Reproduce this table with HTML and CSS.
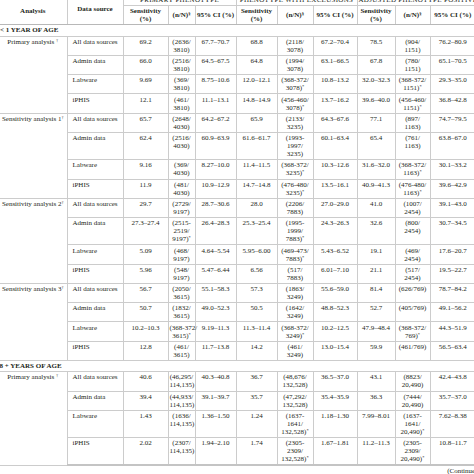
FILE: index.html
```html
<!DOCTYPE html>
<html>
<head>
<meta charset="utf-8">
<link rel="stylesheet" href="styles.css">
</head>
<body>
<div class="page">
<table class="data">
<colgroup>
<col class="w-an"><col class="w-ds">
<col class="w-s1"><col class="w-n1"><col class="w-c1">
<col class="w-s2"><col class="w-n2"><col class="w-c2">
<col class="w-s3"><col class="w-n3"><col class="w-c3">
</colgroup>
<thead>
<tr class="grp">
<th class="an" rowspan="2">Analysis</th>
<th class="ds-h" rowspan="2">Data source</th>
<th class="g" colspan="3">Primary phenotype</th>
<th class="g" colspan="3">Phenotype with exclusions</th>
<th class="g last" colspan="3">Adjusted phenotype positive</th>
</tr>
<tr class="sub">
<th>Sensitivity<br>(%)</th><th>(n/N)<span class="sup">§</span></th><th>95% CI (%)</th>
<th>Sensitivity<br>(%)</th><th>(n/N)<span class="sup">§</span></th><th>95% CI (%)</th>
<th>Sensitivity<br>(%)</th><th>(n/N)<span class="sup">§</span></th><th class="last">95% CI (%)</th>
</tr>
</thead>
<tbody>
<tr class="sec"><td colspan="11">&lt; 1 YEAR OF AGE</td></tr>

<tr><td class="an" rowspan="4">Primary analysis <span class="sup">†</span></td><td class="ds">All data sources</td><td>69.2</td><td>(2636/<br>3810)</td><td>67.7–70.7</td><td>68.8</td><td>(2118/<br>3078)</td><td>67.2–70.4</td><td>78.5</td><td>(904/<br>1151)</td><td class="last">76.2–80.9</td></tr>
<tr><td class="ds">Admin data</td><td>66.0</td><td>(2516/<br>3810)</td><td>64.5–67.5</td><td>64.8</td><td>(1994/<br>3078)</td><td>63.1–66.5</td><td>67.8</td><td>(780/<br>1151)</td><td class="last">65.1–70.5</td></tr>
<tr><td class="ds">Labware</td><td>9.69</td><td>(369/<br>3810)</td><td>8.75–10.6</td><td>12.0–12.1</td><td>(368-372/<br>3078)<span class="sup">*</span></td><td>10.8–13.2</td><td>32.0–32.3</td><td>(368-372/<br>1151)<span class="sup">*</span></td><td class="last">29.3–35.0</td></tr>
<tr><td class="ds">iPHIS</td><td>12.1</td><td>(461/<br>3810)</td><td>11.1–13.1</td><td>14.8–14.9</td><td>(456-460/<br>3078)<span class="sup">*</span></td><td>13.7–16.2</td><td>39.6–40.0</td><td>(456-460/<br>1151)<span class="sup">*</span></td><td class="last">36.8–42.8</td></tr>

<tr><td class="an" rowspan="4">Sensitivity analysis 1<span class="sup">†</span></td><td class="ds">All data sources</td><td>65.7</td><td>(2648/<br>4030)</td><td>64.2–67.2</td><td>65.9</td><td>(2133/<br>3235)</td><td>64.3–67.6</td><td>77.1</td><td>(897/<br>1163)</td><td class="last">74.7–79.5</td></tr>
<tr><td class="ds">Admin data</td><td>62.4</td><td>(2516/<br>4030)</td><td>60.9–63.9</td><td>61.6–61.7</td><td>(1993-<br>1997/<br>3235)</td><td>60.1–63.4</td><td>65.4</td><td>(761/<br>1163)</td><td class="last">63.8–67.0</td></tr>
<tr><td class="ds">Labware</td><td>9.16</td><td>(369/<br>4030)</td><td>8.27–10.0</td><td>11.4–11.5</td><td>(368-372/<br>3235)<span class="sup">*</span></td><td>10.3–12.6</td><td>31.6–32.0</td><td>(368-372/<br>1163)<span class="sup">*</span></td><td class="last">30.1–33.2</td></tr>
<tr><td class="ds">iPHIS</td><td>11.9</td><td>(481/<br>4030)</td><td>10.9–12.9</td><td>14.7–14.8</td><td>(476-480/<br>3235)<span class="sup">*</span></td><td>13.5–16.1</td><td>40.9–41.3</td><td>(476-480/<br>1163)<span class="sup">*</span></td><td class="last">39.6–42.9</td></tr>

<tr><td class="an" rowspan="4">Sensitivity analysis 2<span class="sup">†</span></td><td class="ds">All data sources</td><td>29.7</td><td>(2729/<br>9197)</td><td>28.7–30.6</td><td>28.0</td><td>(2206/<br>7883)</td><td>27.0–29.0</td><td>41.0</td><td>(1007/<br>2454)</td><td class="last">39.1–43.0</td></tr>
<tr><td class="ds">Admin data</td><td>27.3–27.4</td><td>(2515-<br>2519/<br>9197)<span class="sup">*</span></td><td>26.4–28.3</td><td>25.3–25.4</td><td>(1995-<br>1999/<br>7883)<span class="sup">*</span></td><td>24.3–26.3</td><td>32.6</td><td>(800/<br>2454)</td><td class="last">30.7–34.5</td></tr>
<tr><td class="ds">Labware</td><td>5.09</td><td>(468/<br>9197)</td><td>4.64–5.54</td><td>5.95–6.00</td><td>(469-473/<br>7883)<span class="sup">*</span></td><td>5.43–6.52</td><td>19.1</td><td>(469/<br>2454)</td><td class="last">17.6–20.7</td></tr>
<tr><td class="ds">iPHIS</td><td>5.96</td><td>(548/<br>9197)</td><td>5.47–6.44</td><td>6.56</td><td>(517/<br>7883)</td><td>6.01–7.10</td><td>21.1</td><td>(517/<br>2454)</td><td class="last">19.5–22.7</td></tr>

<tr><td class="an" rowspan="4">Sensitivity analysis 3<span class="sup">†</span></td><td class="ds">All data sources</td><td>56.7</td><td>(2050/<br>3615)</td><td>55.1–58.3</td><td>57.3</td><td>(1863/<br>3249)</td><td>55.6–59.0</td><td>81.4</td><td>(626/769)</td><td class="last">78.7–84.2</td></tr>
<tr><td class="ds">Admin data</td><td>50.7</td><td>(1832/<br>3615)</td><td>49.0–52.3</td><td>50.5</td><td>(1642/<br>3249)</td><td>48.8–52.3</td><td>52.7</td><td>(405/769)</td><td class="last">49.1–56.2</td></tr>
<tr><td class="ds">Labware</td><td>10.2–10.3</td><td>(368-372/<br>3615)<span class="sup">*</span></td><td>9.19–11.3</td><td>11.3–11.4</td><td>(368-372/<br>3249)<span class="sup">*</span></td><td>10.2–12.5</td><td>47.9–48.4</td><td>(368-372/<br>769)<span class="sup">*</span></td><td class="last">44.3–51.9</td></tr>
<tr><td class="ds">iPHIS</td><td>12.8</td><td>(461/<br>3615)</td><td>11.7–13.8</td><td>14.2</td><td>(461/<br>3249)</td><td>13.0–15.4</td><td>59.9</td><td>(461/769)</td><td class="last">56.5–63.4</td></tr>

<tr class="sec"><td colspan="11"><span class="clip">18 + YEARS OF AGE</span></td></tr>

<tr><td class="an" rowspan="4">Primary analysis <span class="sup">†</span></td><td class="ds">All data sources</td><td>40.6</td><td>(46,295/<br>114,135)</td><td>40.3–40.8</td><td>36.7</td><td>(48,676/<br>132,528)</td><td>36.5–37.0</td><td>43.1</td><td>(8823/<br>20,490)</td><td class="last">42.4–43.8</td></tr>
<tr><td class="ds">Admin data</td><td>39.4</td><td>(44,933/<br>114,135)</td><td>39.1–39.7</td><td>35.7</td><td>(47,292/<br>132,528)</td><td>35.4–35.9</td><td>36.3</td><td>(7444/<br>20,490)</td><td class="last">35.7–37.0</td></tr>
<tr><td class="ds">Labware</td><td>1.43</td><td>(1636/<br>114,135)</td><td>1.36–1.50</td><td>1.24</td><td>(1637-<br>1641/<br>132,528)<span class="sup">*</span></td><td>1.18–1.30</td><td>7.99–8.01</td><td>(1637-<br>1641/<br>20,490)<span class="sup">*</span></td><td class="last">7.62–8.38</td></tr>
<tr class="end"><td class="ds">iPHIS</td><td>2.02</td><td>(2307/<br>114,135)</td><td>1.94–2.10</td><td>1.74</td><td>(2305-<br>2309/<br>132,528)<span class="sup">*</span></td><td>1.67–1.81</td><td>11.2–11.3</td><td>(2305-<br>2309/<br>20,490)<span class="sup">*</span></td><td class="last">10.8–11.7</td></tr>
</tbody>
</table>
<div class="cont">(Continued)</div>
</div>
</body>
</html>
```

FILE: styles.css
```css
html, body {
  margin: 0;
  padding: 0;
  background: #ffffff;
  overflow: hidden;
}
body {
  font-family: "Liberation Serif", "Times New Roman", serif;
  font-size: 7px;
  line-height: 8px;
  color: #231f20;
}
.page {
  width: 500px;
  margin-top: -6.3px;
  margin-left: -1px;
}
table.data {
  border-collapse: collapse;
  table-layout: fixed;
  width: 476px;
}
.w-an { width: 68px; }
.w-ds { width: 56px; }
.w-s1 { width: 45px; }
.w-n1 { width: 27px; }
.w-c1 { width: 41px; }
.w-s2 { width: 41px; }
.w-n2 { width: 36px; }
.w-c2 { width: 44px; }
.w-s3 { width: 38px; }
.w-n3 { width: 35px; }
.w-c3 { width: 45px; }

th, td {
  padding: 1.15px 1px;
  border: 1px solid #cccccc;
  white-space: nowrap;
  text-align: center;
  vertical-align: top;
  overflow: visible;
}
th {
  font-weight: bold;
  vertical-align: middle;
}
tr.grp th.g {
  font-weight: normal;
  text-transform: uppercase;
  letter-spacing: 0.3px;
}
tr.sub th {
  border-bottom: 1px solid #b8b8b8;
}
th.an {
  padding-top: 4px;
  border-bottom: 1px solid #b8b8b8;
}
th.ds-h {
  border-bottom: 1px solid #b8b8b8;
}
.an {
  border-left: none;
}
.last {
  border-right: none;
}
td.ds {
  text-align: left;
  padding-left: 5px;
}
tr.sec td {
  text-align: left;
  font-weight: bold;
  padding-left: 1px;
  border-left: none;
  border-right: none;
}
.clip {
  margin-left: -4px;
}
tr.end td {
  border-bottom: 2px solid #c4c4c4;
}
.sup {
  font-size: 4.5px;
  line-height: 0;
  vertical-align: 2.5px;
}
.cont {
  width: 482px;
  text-align: right;
  margin-top: 1px;
}
```
